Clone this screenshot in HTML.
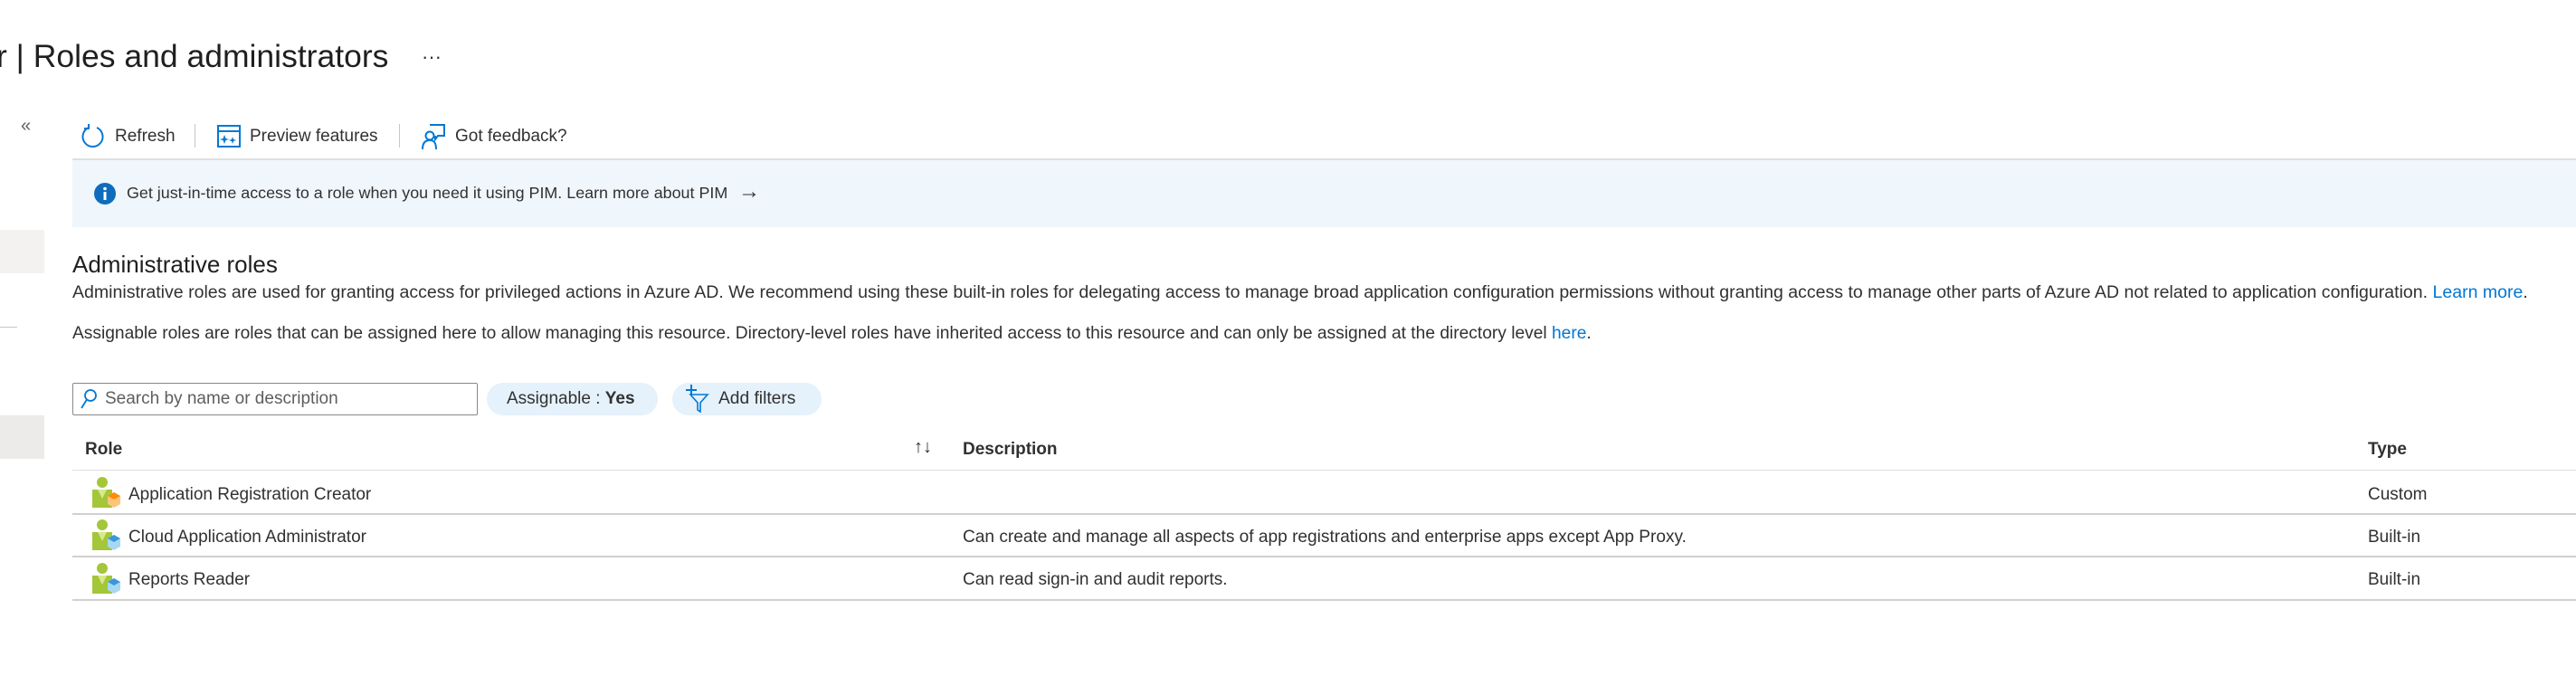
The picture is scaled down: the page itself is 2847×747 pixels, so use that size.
<!DOCTYPE html>
<html><head><meta charset="utf-8"><style>
*{margin:0;padding:0;box-sizing:border-box}
body{width:2847px;height:747px;background:#fff;font-family:"Liberation Sans",sans-serif;color:#323130;position:relative;overflow:hidden;font-size:19px}
.a{position:absolute;white-space:nowrap}
.blue{color:#0078d4}
.line{position:absolute;background:#e1dfdd;height:2px}
</style></head><body>
<div class="a" style="left:-4px;top:42px;font-size:35.5px;font-weight:300;color:#201f1e">r | Roles and administrators</div>
<div class="a" style="left:466px;top:50px;font-size:22px;color:#323130">···</div>

<div class="a" style="left:23px;top:128px;font-size:20px;color:#605e5c">«</div>
<div style="position:absolute;left:0;top:254px;width:49px;height:48px;background:#f3f2f1"></div>
<div style="position:absolute;left:0;top:361px;width:19px;height:1px;background:#c8c6c4"></div>
<div style="position:absolute;left:0;top:459px;width:49px;height:48px;background:#edebe9"></div>

<!-- toolbar -->
<svg class="a" style="left:90px;top:137px" width="26" height="28" viewBox="0 0 26 28"><path d="M8 4 A11 11 0 1 0 17 4" fill="none" stroke="#0078d4" stroke-width="2"/><path d="M8 0 V5 H3" fill="none" stroke="#0078d4" stroke-width="2"/></svg>
<div class="a" style="left:127px;top:140px;font-size:19px">Refresh</div>
<div style="position:absolute;left:215px;top:137px;width:1px;height:26px;background:#c8c6c4"></div>
<svg class="a" style="left:240px;top:138px" width="26" height="25" viewBox="0 0 26 25"><rect x="1" y="1" width="24" height="23" fill="none" stroke="#0078d4" stroke-width="2"/><line x1="1" y1="7" x2="25" y2="7" stroke="#0078d4" stroke-width="2"/><path d="M8 11 L9.5 15 L13 16 L9.5 17 L8 21 L6.5 17 L3 16 L6.5 15Z M17 13 L18 16 L21 17 L18 18 L17 21 L16 18 L13 17 L16 16Z" fill="#0078d4"/></svg>
<div class="a" style="left:276px;top:140px;font-size:19px">Preview features</div>
<div style="position:absolute;left:441px;top:137px;width:1px;height:26px;background:#c8c6c4"></div>
<svg class="a" style="left:465px;top:137px" width="28" height="28" viewBox="0 0 28 28"><path d="M10 1 H26 V13 H19 L16 17 V13" fill="none" stroke="#0078d4" stroke-width="2"/><circle cx="10" cy="13" r="4.5" fill="none" stroke="#0078d4" stroke-width="2"/><path d="M2 28 C2 20 6 18 10 18 C14 18 17 20 17 28" fill="none" stroke="#0078d4" stroke-width="2"/></svg>
<div class="a" style="left:503px;top:140px;font-size:19px">Got feedback?</div>
<div class="line" style="left:80px;top:175px;right:0;height:2px;background:#e1dfdd"></div>

<!-- banner -->
<div style="position:absolute;left:80px;top:177px;right:0;height:74px;background:#eff6fc"></div>
<svg class="a" style="left:104px;top:202px" width="24" height="24" viewBox="0 0 24 24"><circle cx="12" cy="12" r="12" fill="#0f6cbd"/><rect x="10.5" y="10" width="3" height="9" fill="#fff"/><circle cx="12" cy="6.5" r="1.8" fill="#fff"/></svg>
<div class="a" style="left:140px;top:203px;font-size:17.9px">Get just-in-time access to a role when you need it using PIM. Learn more about PIM</div>
<div class="a" style="left:816px;top:198px;font-size:24px">→</div>

<div class="a" style="left:80px;top:277px;font-size:26px;color:#201f1e">Administrative roles</div>
<div class="a" style="left:80px;top:312px;font-size:19.55px">Administrative roles are used for granting access for privileged actions in Azure AD. We recommend using these built-in roles for delegating access to manage broad application configuration permissions without granting access to manage other parts of Azure AD not related to application configuration. <span class="blue">Learn more</span>.</div>
<div class="a" style="left:80px;top:358px;font-size:19.2px">Assignable roles are roles that can be assigned here to allow managing this resource. Directory-level roles have inherited access to this resource and can only be assigned at the directory level <span class="blue">here</span>.</div>

<!-- filters -->
<div style="position:absolute;left:80px;top:423px;width:448px;height:36px;border:1.5px solid #8a8886;border-radius:2px"></div>
<svg class="a" style="left:88px;top:429px" width="20" height="24" viewBox="0 0 20 24"><circle cx="12" cy="8" r="6" fill="none" stroke="#0078d4" stroke-width="1.8"/><line x1="8" y1="12.5" x2="2" y2="22" stroke="#0078d4" stroke-width="1.8"/></svg>
<div class="a" style="left:116px;top:430px;font-size:19px;color:#605e5c">Search by name or description</div>
<div style="position:absolute;left:538px;top:423px;width:189px;height:36px;border-radius:18px;background:#e5f1fb"></div>
<div class="a" style="left:560px;top:430px;font-size:19px">Assignable : <b>Yes</b></div>
<div style="position:absolute;left:743px;top:423px;width:165px;height:36px;border-radius:18px;background:#e5f1fb"></div>
<svg class="a" style="left:758px;top:424px" width="26" height="32" viewBox="0 0 26 32"><path d="M6 1 V13 M0 7 H12" stroke="#0078d4" stroke-width="2"/><path d="M5 12 H24 L16 21 V31 L13 29 V21 Z" fill="none" stroke="#0078d4" stroke-width="1.6"/></svg>
<div class="a" style="left:794px;top:430px;font-size:19.2px">Add filters</div>

<!-- table -->
<div class="a" style="left:94px;top:486px;font-size:19px;font-weight:bold">Role</div>
<div class="a" style="left:1010px;top:483px;font-size:20px">↑↓</div>
<div class="a" style="left:1064px;top:486px;font-size:19px;font-weight:bold">Description</div>
<div class="a" style="left:2617px;top:486px;font-size:19px;font-weight:bold">Type</div>
<div class="line" style="left:80px;right:0;top:519px;height:1px"></div>

<svg class="a" style="left:100px;top:527px" width="36" height="36" viewBox="0 0 36 36"><circle cx="13" cy="6" r="6" fill="#a4c639"/><path d="M2 34 V14 H24 V34Z" fill="#a4c639"/><path d="M8 14 L13 24 L18 14Z" fill="#d8e98c"/><path d="M26 17 L33 21 V30 L26 34 L19 30 V21Z" fill="#ffc47a"/><path d="M26 17 L33 21 L26 25 L19 21Z" fill="#ff8c00"/></svg>
<div class="a" style="left:142px;top:536px">Application Registration Creator</div>
<div class="a" style="left:2617px;top:536px">Custom</div>
<div class="line" style="left:80px;right:0;top:567px;height:2px;background:#d2d0ce"></div>

<svg class="a" style="left:100px;top:574px" width="36" height="36" viewBox="0 0 36 36"><circle cx="13" cy="6" r="6" fill="#a4c639"/><path d="M2 34 V14 H24 V34Z" fill="#a4c639"/><path d="M8 14 L13 24 L18 14Z" fill="#d8e98c"/><path d="M26 17 L33 21 V30 L26 34 L19 30 V21Z" fill="#a7d8f0"/><path d="M26 17 L33 21 L26 25 L19 21Z" fill="#3a96dd"/></svg>
<div class="a" style="left:142px;top:583px">Cloud Application Administrator</div>
<div class="a" style="left:1064px;top:583px;font-size:19.1px">Can create and manage all aspects of app registrations and enterprise apps except App Proxy.</div>
<div class="a" style="left:2617px;top:583px">Built-in</div>
<div class="line" style="left:80px;right:0;top:614px;height:2px;background:#d2d0ce"></div>

<svg class="a" style="left:100px;top:622px" width="36" height="36" viewBox="0 0 36 36"><circle cx="13" cy="6" r="6" fill="#a4c639"/><path d="M2 34 V14 H24 V34Z" fill="#a4c639"/><path d="M8 14 L13 24 L18 14Z" fill="#d8e98c"/><path d="M26 17 L33 21 V30 L26 34 L19 30 V21Z" fill="#a7d8f0"/><path d="M26 17 L33 21 L26 25 L19 21Z" fill="#3a96dd"/></svg>
<div class="a" style="left:142px;top:630px">Reports Reader</div>
<div class="a" style="left:1064px;top:630px">Can read sign-in and audit reports.</div>
<div class="a" style="left:2617px;top:630px">Built-in</div>
<div class="line" style="left:80px;right:0;top:662px;height:2px;background:#d2d0ce"></div>
</body></html>
